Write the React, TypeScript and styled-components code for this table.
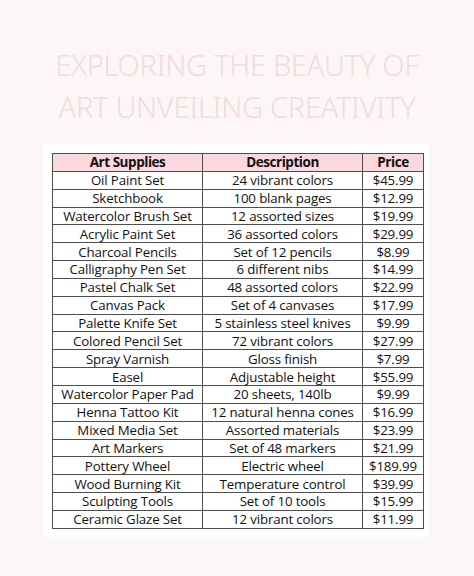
import styled, { createGlobalStyle } from 'styled-components';

const GlobalStyle = createGlobalStyle`
    html, body {
        margin: 0;
        padding: 0;
        background: #fdf6f6;
    }
`;

const supplies = [
    ['Oil Paint Set', '24 vibrant colors', '$45.99'],
    ['Sketchbook', '100 blank pages', '$12.99'],
    ['Watercolor Brush Set', '12 assorted sizes', '$19.99'],
    ['Acrylic Paint Set', '36 assorted colors', '$29.99'],
    ['Charcoal Pencils', 'Set of 12 pencils', '$8.99'],
    ['Calligraphy Pen Set', '6 different nibs', '$14.99'],
    ['Pastel Chalk Set', '48 assorted colors', '$22.99'],
    ['Canvas Pack', 'Set of 4 canvases', '$17.99'],
    ['Palette Knife Set', '5 stainless steel knives', '$9.99'],
    ['Colored Pencil Set', '72 vibrant colors', '$27.99'],
    ['Spray Varnish', 'Gloss finish', '$7.99'],
    ['Easel', 'Adjustable height', '$55.99'],
    ['Watercolor Paper Pad', '20 sheets, 140lb', '$9.99'],
    ['Henna Tattoo Kit', '12 natural henna cones', '$16.99'],
    ['Mixed Media Set', 'Assorted materials', '$23.99'],
    ['Art Markers', 'Set of 48 markers', '$21.99'],
    ['Pottery Wheel', 'Electric wheel', '$189.99'],
    ['Wood Burning Kit', 'Temperature control', '$39.99'],
    ['Sculpting Tools', 'Set of 10 tools', '$15.99'],
    ['Ceramic Glaze Set', '12 vibrant colors', '$11.99'],
];

export default function App() {
    return (
        <Page>
            <GlobalStyle />
            <Title>
                EXPLORING THE BEAUTY OF
                <br />
                ART UNVEILING CREATIVITY
            </Title>

            <Card>
                <Table>
                    <colgroup>
                        <Col $width={150} />
                        <Col $width={160} />
                        <Col $width={61} />
                    </colgroup>
                    <thead>
                        <tr>
                            <HeadCell>Art Supplies</HeadCell>
                            <HeadCell>Description</HeadCell>
                            <HeadCell>Price</HeadCell>
                        </tr>
                    </thead>
                    <tbody>
                        {supplies.map(([name, desc, price]) => (
                            <tr key={name}>
                                <Cell>{name}</Cell>
                                <Cell>{desc}</Cell>
                                <Cell>{price}</Cell>
                            </tr>
                        ))}
                    </tbody>
                </Table>
            </Card>
        </Page>
    );
}

const Page = styled.main`
    width: 474px;
    height: 576px;
    overflow: hidden;
    padding-top: 44px;
    box-sizing: border-box;
`;

const Title = styled.h1`
    margin: 0;
    text-align: center;
    font-family: 'Noto Sans', sans-serif;
    font-weight: 300;
    font-size: 29px;
    line-height: 42px;
    color: #f2dade;
    letter-spacing: -0.3px;
`;

const Card = styled.section`
    margin: 16px 0 0 43px;
    width: 386px;
    box-sizing: border-box;
    padding: 9px 6px 8px 9px;
    background: #ffffff;
`;

const Table = styled.table`
    width: 371px;
    border-collapse: collapse;
    table-layout: fixed;
    font-family: 'Open Sans', sans-serif;
    font-size: 13.3px;
    font-weight: 500;
    letter-spacing: -0.15px;
    color: #111;
`;

const Col = styled.col<{ $width: number }>`
    width: ${({ $width }) => $width}px;
`;

const HeadCell = styled.th`
    height: 16.85px;
    padding: 0;
    border: 1px solid #4d4d4d;
    background: #f9d8de;
    font-weight: 700;
    font-size: 13.5px;
    letter-spacing: -0.45px;
    line-height: 16px;
    text-align: center;
    white-space: nowrap;
`;

const Cell = styled.td`
    height: 16.85px;
    padding: 0;
    border: 1px solid #4d4d4d;
    text-align: center;
    white-space: nowrap;
    line-height: 16px;
`;
